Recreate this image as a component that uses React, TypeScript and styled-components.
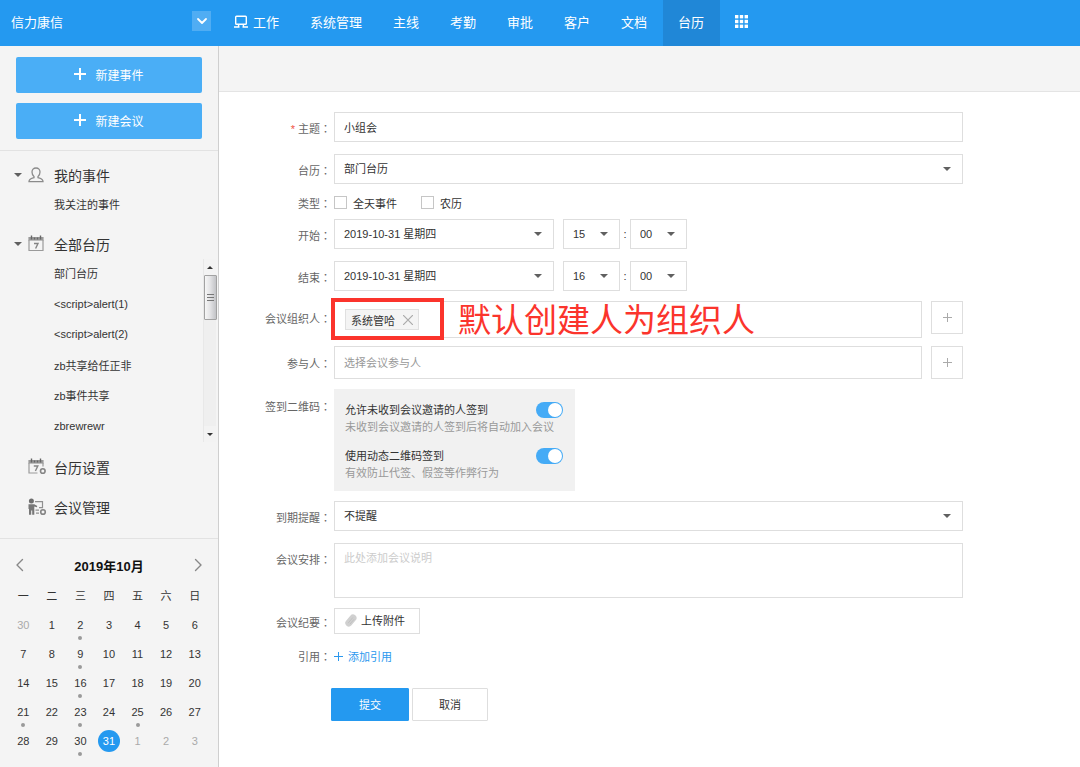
import React from "react";
import styled, { createGlobalStyle, css } from "styled-components";

const GlobalStyle = createGlobalStyle`
  *, *::before, *::after { box-sizing: border-box; }
  body { margin: 0; background: #fff; }
  body, button, input, select, textarea {
    font-family: "Liberation Sans", "Noto Sans CJK SC", sans-serif;
    font-size: 11px;
    color: #333;
  }
  a { color: inherit; text-decoration: none; }
  button { cursor: pointer; padding: 0; }
  ul { list-style: none; margin: 0; padding: 0; }
  svg { display: block; flex: none; }
`;

const line = "#dedede";

/* ---------- shell ---------- */

const Page = styled.div`
  display: flex;
  flex-direction: column;
  min-height: 100vh;
`;

const TopBar = styled.header`
  display: flex;
  height: 46px;
  background: #2499f0;
  color: #fff;
  font-size: 13px;
`;

const Company = styled.div`
  display: flex;
  align-items: center;
  justify-content: space-between;
  width: 219px;
  padding: 0 8px 4px 11px;
`;

const CompanySwitch = styled.button`
  display: flex;
  align-items: center;
  justify-content: center;
  width: 19px;
  height: 20px;
  border: 0;
  background: #50adf3;
`;

const Nav = styled.nav`
  display: flex;
`;

const NavLink = styled.a<{ $active?: boolean }>`
  display: flex;
  align-items: center;
  gap: 5px;
  padding: 0 16px 4px 15px;
  background: ${(p) => (p.$active ? "#2087d7" : "transparent")};
  white-space: nowrap;
`;

const Body = styled.div`
  display: flex;
  flex: 1;
`;

const Sidebar = styled.aside`
  flex: none;
  width: 219px;
  border-right: 1px solid #cfcfcf;
  background: #f4f4f4;
`;

const Main = styled.main`
  flex: 1;
  min-width: 0;
`;

const SubBar = styled.div`
  height: 46px;
  border-bottom: 1px solid #e4e4e4;
  background: #f4f4f4;
`;

/* ---------- sidebar ---------- */

const CreateArea = styled.div`
  display: flex;
  flex-direction: column;
  gap: 10px;
  padding: 11px 16px;
  border-bottom: 1px solid #e2e2e2;
`;

const CreateButton = styled.button`
  display: flex;
  align-items: center;
  justify-content: center;
  gap: 9px;
  height: 36px;
  padding-bottom: 2px;
  border: 0;
  border-radius: 2px;
  background: #4aaef6;
  color: #fff;
  font-size: 12px;
`;

const Menu = styled.nav`
  display: flex;
  flex-direction: column;
  gap: 10px;
  padding: 9px 0 16px;
  border-bottom: 1px solid #e2e2e2;
`;

const MenuHeading = styled.a`
  display: grid;
  grid-template-columns: 14px 26px 1fr;
  align-items: center;
  height: 30px;
  padding: 0 0 1px 14px;
  font-size: 14px;
`;

const MenuItem = styled.a`
  display: flex;
  align-items: center;
  min-height: 29px;
  padding: 0 0 2px 54px;
`;

const ScrollArea = styled.div`
  display: flex;
  height: 183px;
  padding-right: 2px;
`;

const CalendarList = styled.ul`
  flex: 1;
  display: grid;
  grid-auto-rows: 1fr;
  align-items: center;
`;

const ScrollTrack = styled.div`
  display: flex;
  flex-direction: column;
  justify-content: space-between;
  align-items: center;
  width: 13px;
  border-left: 1px solid #e8e8e8;
  background: #efefef;
`;

const ScrollEnd = styled.button`
  display: flex;
  align-items: center;
  justify-content: center;
  width: 12px;
  height: 16px;
  border: 0;
  background: #f3f3f3;
`;

const ScrollThumb = styled.div`
  display: flex;
  align-items: center;
  justify-content: center;
  width: 13px;
  height: 45px;
  margin-bottom: auto;
  border: 1px solid #a2a2a2;
  border-radius: 1px;
  background: linear-gradient(90deg, #f6f6f6, #e4e4e6 45%, #c2c3c6);
`;

/* ---------- month calendar ---------- */

const Month = styled.section`
  padding: 12px 9px 0;
`;

const MonthHead = styled.div`
  display: flex;
  align-items: center;
  justify-content: space-between;
  height: 30px;
  padding: 0 6px 2px;
`;

const MonthTitle = styled.h2`
  margin: 0;
  color: #111;
  font-size: 13px;
`;

const MonthArrow = styled.button`
  display: flex;
  border: 0;
  background: none;
`;

const MonthTable = styled.table`
  width: 100%;
  border-collapse: collapse;
  table-layout: fixed;
  text-align: center;

  th,
  td {
    height: 29px;
    padding: 0;
    font-weight: 400;
    line-height: 22px;
  }
`;

const Day = styled.span<{ $dim?: boolean; $today?: boolean; $event?: boolean }>`
  position: relative;
  display: inline-block;
  width: 22px;
  border-radius: 50%;
  vertical-align: middle;
  color: ${(p) => (p.$dim ? "#aaa" : "#333")};
  ${(p) => p.$today && css`background: #2499f0; color: #fff;`}
  ${(p) =>
    p.$event &&
    css`
      &::after {
        content: "";
        position: absolute;
        left: 9px;
        bottom: -4px;
        width: 4px;
        height: 4px;
        border-radius: 50%;
        background: #9a9a9a;
      }
    `}
`;

/* ---------- form ---------- */

const Form = styled.form`
  display: flex;
  flex-direction: column;
  gap: 10px;
  padding: 20px 117px 20px 0;
`;

const Group = styled.div<{ $gap?: number }>`
  display: flex;
  flex-direction: column;
  gap: ${(p) => p.$gap ?? 12}px;
`;

const Row = styled.div`
  display: grid;
  grid-template-columns: 112px minmax(0, 1fr);
  column-gap: 3px;
  align-items: start;
`;

const Label = styled.label<{ $line?: number }>`
  height: ${(p) => (p.$line ?? 32) - 2}px;
  line-height: ${(p) => p.$line ?? 32}px;
  color: #666;
  text-align: right;
  white-space: nowrap;
`;

const Colon = styled.span`
  font-family: "Noto Sans CJK TC", sans-serif;
`;

const Required = styled.span`
  color: #f0533f;
`;

const boxed = css`
  width: 100%;
  border: 1px solid ${line};
  border-radius: 0;
  background: #fff;
  outline: 0;
`;

const TextInput = styled.input<{ $tall?: boolean }>`
  ${boxed}
  height: ${(p) => (p.$tall ? 33 : 30)}px;
  padding: 0 9px;

  &::placeholder {
    color: #999;
  }
`;

const TextArea = styled.textarea`
  ${boxed}
  display: block;
  height: 55px;
  padding: 6px 9px;
  line-height: 16px;
  resize: none;

  &::placeholder {
    color: #ccc;
  }
`;

const SelectBox = styled.div<{ $width?: number }>`
  position: relative;
  width: ${(p) => (p.$width ? `${p.$width}px` : "100%")};

  select {
    ${boxed}
    display: block;
    height: 30px;
    padding: 0 24px 0 9px;
    appearance: none;
  }

  svg {
    position: absolute;
    right: 12px;
    top: 13px;
    pointer-events: none;
  }
`;

const TimeLine = styled.div`
  display: flex;
  align-items: center;
`;

const TimePair = styled.div`
  display: flex;
  align-items: center;
  margin-left: 9px;
`;

const TimeColon = styled.span`
  width: 10px;
  text-align: center;
`;

const Checks = styled.div`
  display: flex;
  gap: 24px;
`;

const Check = styled.label`
  display: flex;
  align-items: center;
  gap: 6px;
  height: 13px;

  input {
    width: 13px;
    height: 13px;
    margin: 0;
    appearance: none;
    border: 1px solid #c6c6c6;
    background: #fff;
  }
`;

const PeopleLine = styled.div`
  display: flex;
  align-items: flex-start;
  gap: 9px;
`;

const PeopleBox = styled.div`
  ${boxed}
  position: relative;
  flex: 1;
  display: flex;
  align-items: center;
  height: 37px;
  padding: 0 10px;
`;

const AddButton = styled.button`
  display: flex;
  align-items: center;
  justify-content: center;
  flex: none;
  width: 32px;
  height: 33px;
  border: 1px solid ${line};
  background: #fff;
`;

const Tag = styled.span`
  display: flex;
  align-items: center;
  gap: 8px;
  height: 21px;
  padding: 0 5px;
  border: 1px solid #e0e0e0;
  background: #f4f4f4;
`;

const TagRemove = styled.button`
  border: 0;
  background: none;
`;

const Highlight = styled.span`
  position: absolute;
  left: -4px;
  top: -4px;
  width: 113px;
  height: 42px;
  border: 4px solid #fb342c;
  pointer-events: none;
`;

const Note = styled.span`
  position: absolute;
  left: 123px;
  top: 0;
  color: #fb342c;
  font-size: 33px;
  line-height: 38px;
  white-space: nowrap;
`;

const SignInPanel = styled.div`
  display: flex;
  flex-direction: column;
  gap: 12px;
  width: 241px;
  padding: 13px 12px 9px 11px;
  background: #f1f1f1;
`;

const SignInOption = styled.label`
  display: grid;
  grid-template-columns: 1fr 27px;
  line-height: 16px;
`;

const Hint = styled.span`
  grid-column: 1 / -1;
  color: #999;
  line-height: 18px;
`;

const Toggle = styled.input`
  display: flex;
  align-items: center;
  justify-content: flex-end;
  width: 27px;
  height: 16px;
  margin: 0;
  padding: 1px;
  appearance: none;
  border-radius: 8px;
  background: #45abf6;

  &::before {
    content: "";
    width: 14px;
    height: 14px;
    border-radius: 50%;
    background: #fff;
  }

  &:not(:checked) {
    justify-content: flex-start;
    background: #ccc;
  }
`;

const UploadButton = styled.button`
  display: flex;
  align-items: center;
  justify-self: start;
  gap: 4px;
  height: 26px;
  padding: 0 14px 2px 10px;
  border: 1px solid ${line};
  background: #fff;
`;

const AddLink = styled.a`
  display: flex;
  align-items: center;
  gap: 5px;
  height: 20px;
  color: #2b98ee;
`;

const Actions = styled.div`
  display: flex;
  gap: 3px;
  padding: 12px 0 0 112px;
`;

const ActionButton = styled.button<{ $primary?: boolean }>`
  width: ${(p) => (p.$primary ? 78 : 76)}px;
  height: 33px;
  padding-bottom: 2px;
  border: 1px solid ${(p) => (p.$primary ? "#2499f0" : line)};
  border-radius: 1px;
  background: ${(p) => (p.$primary ? "#2499f0" : "#fff")};
  color: ${(p) => (p.$primary ? "#fff" : "#333")};
`;

/* ---------- icons ---------- */

const Caret = ({ up }: { up?: boolean }) => (
  <svg width="8" height="4" viewBox="0 0 8 4" aria-hidden="true">
    <path d={up ? "M0 4h8L4 0z" : "M0 0h8L4 4z"} fill="#606060" />
  </svg>
);

const SmallCaret = ({ up }: { up?: boolean }) => (
  <svg width="6" height="3" viewBox="0 0 6 3" aria-hidden="true">
    <path d={up ? "M0 3h6L3 0z" : "M0 0h6L3 3z"} fill="#333" />
  </svg>
);

const Plus = ({ size, color, weight = 1 }: { size: number; color: string; weight?: number }) => (
  <svg width={size} height={size} viewBox={`0 0 ${size} ${size}`} aria-hidden="true">
    <path
      d={`M${size / 2} 0V${size}M0 ${size / 2}H${size}`}
      stroke={color}
      strokeWidth={weight}
      fill="none"
    />
  </svg>
);

const Chevron = ({ d, color, weight, w, h }: { d: string; color: string; weight: number; w: number; h: number }) => (
  <svg width={w} height={h} viewBox={`0 0 ${w} ${h}`} aria-hidden="true">
    <path d={d} fill="none" stroke={color} strokeWidth={weight} strokeLinecap="round" strokeLinejoin="round" />
  </svg>
);

const ComputerIcon = () => (
  <svg width="14" height="13" viewBox="0 0 14 13" fill="none" stroke="#fff" strokeWidth="1.4" aria-hidden="true">
    <rect x="1.700" y="1.200" width="10.600" height="8" rx="0.800" />
    <path d="M0 12h5.500M8.500 12H14M4.600 9.600v2.400M9.400 9.600v2.400" />
  </svg>
);

const GridIcon = () => (
  <svg width="13" height="13" viewBox="0 0 13 13" fill="#fff" aria-hidden="true">
    {[0, 4.8, 9.6].map((y) => [0, 4.8, 9.6].map((x) => <rect key={`${x}-${y}`} x={x} y={y} width="3.4" height="3.4" />))}
  </svg>
);

const PersonIcon = () => (
  <svg width="16" height="16" viewBox="0 0 16 16" fill="none" stroke="#8b8b8b" strokeWidth="1.3" aria-hidden="true">
    <path d="M8 1C5.400 1 4 2.700 4 5c0 2 .8 3.600 2 4.500v1.200C4.200 11.300 1 11.800 1 14.600h14c0-2.800-3.200-3.300-5-3.900V9.500c1.200-.9 2-2.500 2-4.500 0-2.300-1.400-4-4-4z" />
  </svg>
);

const CalendarIcon = () => (
  <svg width="16" height="17" viewBox="0 0 16 17" fill="none" stroke="#9a9a9a" aria-hidden="true">
    <path d="M1 5v10.500h14V5" strokeWidth="1.200" />
    <path d="M.4 2h15.200v3.600H.4z" fill="#9a9a9a" stroke="none" />
    <path d="M3.500 .5v4M6.500 2.500v2M9.500 2.500v2M12.500 .5v4" stroke="#666" strokeWidth="1.400" />
    <path d="M6 8.500h4L7.600 13.500" strokeWidth="1.400" stroke="#858585" />
  </svg>
);

const CalendarSettingsIcon = () => (
  <svg width="19" height="17" viewBox="0 0 19 17" fill="none" stroke="#9a9a9a" aria-hidden="true">
    <path d="M1 5v10h8.500M15 5v3.500" strokeWidth="1.200" />
    <path d="M.4 2h15.200v3.600H.4z" fill="#9a9a9a" stroke="none" />
    <path d="M3.500 .5v4M6.500 2.500v2M9.500 2.500v2M12.500 .5v4" stroke="#666" strokeWidth="1.400" />
    <path d="M5.800 8h4L7.400 13" strokeWidth="1.400" stroke="#858585" />
    <circle cx="14.800" cy="13" r="2.300" strokeWidth="1.600" stroke="#858585" />
  </svg>
);

const MeetingIcon = () => (
  <svg width="19" height="18" viewBox="0 0 19 18" fill="none" stroke="#909090" aria-hidden="true">
    <circle cx="3.400" cy="3" r="2.500" fill="#6e6e6e" stroke="none" />
    <path d="M.5 6.200h5.800l3 1.700-.5 1.400-2.500-.8V16.800H4.200V12.500H3.200v4.300H1V11H.5z" fill="#777" stroke="none" />
    <path d="M7 3.600h7.500v6H11" strokeWidth="1.200" />
    <path d="M7.500 12.200h3.500M8 15.200h3" strokeWidth="1.200" />
    <circle cx="15" cy="14" r="2.300" strokeWidth="1.600" stroke="#858585" />
  </svg>
);

const ClipIcon = () => (
  <svg width="12" height="13" viewBox="0 0 12 13" fill="none" strokeLinecap="round" aria-hidden="true">
    <path d="M3.800 9 8 4" stroke="#d0d0d0" strokeWidth="7" />
    <path d="M3.400 8.800 7.600 3.800M5.200 9.800 8.800 5.600" stroke="#bcbcbc" strokeWidth="0.800" />
  </svg>
);

const CloseIcon = () => (
  <svg width="10" height="10" viewBox="0 0 10 10" aria-hidden="true">
    <path d="M0 0l10 10M10 0L0 10" stroke="#aaa" strokeWidth="1.200" />
  </svg>
);

/* ---------- data ---------- */

const navItems = ["系统管理", "主线", "考勤", "审批", "客户", "文档", "台历"];
const calendars = ["部门台历", "<script>alert(1)", "<script>alert(2)", "zb共享给任正非", "zb事件共享", "zbrewrewr"];
const weekdays = ["一", "二", "三", "四", "五", "六", "日"];
const weeks = [
  [30, 1, 2, 3, 4, 5, 6],
  [7, 8, 9, 10, 11, 12, 13],
  [14, 15, 16, 17, 18, 19, 20],
  [21, 22, 23, 24, 25, 26, 27],
  [28, 29, 30, 31, 1, 2, 3],
];
const eventDays = [2, 9, 16, 21, 23, 25, 30];

function FieldLabel({ id, text, required, lineHeight }: { id?: string; text: string; required?: boolean; lineHeight?: number }) {
  return (
    <Label htmlFor={id} $line={lineHeight}>
      {required && <Required>* </Required>}
      {text}
      <Colon>：</Colon>
    </Label>
  );
}

function Dropdown({ id, value, width, label }: { id?: string; value: string; width?: number; label?: string }) {
  return (
    <SelectBox $width={width}>
      <select id={id} aria-label={label} defaultValue={value}>
        <option>{value}</option>
      </select>
      <Caret />
    </SelectBox>
  );
}

function TimeRow({ id, text, hour }: { id: string; text: string; hour: string }) {
  return (
    <Row>
      <FieldLabel id={id} text={text} />
      <TimeLine>
        <Dropdown id={id} value="2019-10-31 星期四" width={220} />
        <TimePair>
          <Dropdown value={hour} width={57} label={`${text}小时`} />
          <TimeColon>:</TimeColon>
          <Dropdown value="00" width={57} label={`${text}分钟`} />
        </TimePair>
      </TimeLine>
    </Row>
  );
}

function MonthCalendar() {
  return (
    <Month>
      <MonthHead>
        <MonthArrow type="button" aria-label="上个月">
          <Chevron w={9} h={14} d="M7.500 1.500 2 7l5.500 5.500" color="#888" weight={1.4} />
        </MonthArrow>
        <MonthTitle>2019年10月</MonthTitle>
        <MonthArrow type="button" aria-label="下个月">
          <Chevron w={9} h={14} d="M1.500 1.500 7 7l-5.500 5.500" color="#888" weight={1.4} />
        </MonthArrow>
      </MonthHead>
      <MonthTable>
        <thead>
          <tr>
            {weekdays.map((d) => (
              <th key={d} scope="col">{d}</th>
            ))}
          </tr>
        </thead>
        <tbody>
          {weeks.map((week, w) => (
            <tr key={w}>
              {week.map((d, i) => {
                const dim = (w === 0 && d > 7) || (w === 4 && d < 7);
                return (
                  <td key={i}>
                    <Day $dim={dim} $today={d === 31} $event={!dim && eventDays.includes(d)}>{d}</Day>
                  </td>
                );
              })}
            </tr>
          ))}
        </tbody>
      </MonthTable>
    </Month>
  );
}

function SideMenu() {
  return (
    <Menu>
      <div>
        <MenuHeading href="#mine"><Caret /><PersonIcon />我的事件</MenuHeading>
        <MenuItem href="#followed">我关注的事件</MenuItem>
      </div>
      <div>
        <MenuHeading href="#all"><Caret /><CalendarIcon />全部台历</MenuHeading>
        <ScrollArea>
          <CalendarList>
            {calendars.map((name) => (
              <li key={name}><MenuItem href="#calendar">{name}</MenuItem></li>
            ))}
          </CalendarList>
          <ScrollTrack>
            <ScrollEnd type="button" aria-label="向上滚动"><SmallCaret up /></ScrollEnd>
            <ScrollThumb>
              <svg width="7" height="8" viewBox="0 0 7 8" aria-hidden="true">
                <path d="M0 .5h7M0 3.500h7M0 6.500h7" stroke="#777" />
              </svg>
            </ScrollThumb>
            <ScrollEnd type="button" aria-label="向下滚动"><SmallCaret /></ScrollEnd>
          </ScrollTrack>
        </ScrollArea>
      </div>
      <MenuHeading href="#settings"><span /><CalendarSettingsIcon />台历设置</MenuHeading>
      <MenuHeading href="#meetings"><span /><MeetingIcon />会议管理</MenuHeading>
    </Menu>
  );
}

function MeetingForm() {
  return (
    <Form onSubmit={(e) => e.preventDefault()}>
      <Group>
        <Row>
          <FieldLabel id="subject" text="主题" required />
          <TextInput id="subject" defaultValue="小组会" />
        </Row>
        <Row>
          <FieldLabel id="calendar" text="台历" />
          <Dropdown id="calendar" value="部门台历" />
        </Row>
        <Row>
          <FieldLabel text="类型" lineHeight={15} />
          <Checks>
            <Check><input type="checkbox" />全天事件</Check>
            <Check><input type="checkbox" />农历</Check>
          </Checks>
        </Row>
      </Group>
      <Group>
        <TimeRow id="start" text="开始" hour="15" />
        <TimeRow id="end" text="结束" hour="16" />
      </Group>
      <Group $gap={8}>
        <Row>
          <FieldLabel text="会议组织人" lineHeight={35} />
          <PeopleLine>
            <PeopleBox>
              <Tag>
                系统管哈
                <TagRemove type="button" aria-label="移除"><CloseIcon /></TagRemove>
              </Tag>
              <Highlight />
              <Note>默认创建人为组织人</Note>
            </PeopleBox>
            <AddButton type="button" aria-label="添加组织人"><Plus size={9} color="#aaa" /></AddButton>
          </PeopleLine>
        </Row>
        <Row>
          <FieldLabel id="members" text="参与人" lineHeight={35} />
          <PeopleLine>
            <TextInput id="members" placeholder="选择会议参与人" $tall />
            <AddButton type="button" aria-label="添加参与人"><Plus size={9} color="#aaa" /></AddButton>
          </PeopleLine>
        </Row>
      </Group>
      <Row>
        <FieldLabel text="签到二维码" lineHeight={35} />
        <SignInPanel>
          <SignInOption>
            允许未收到会议邀请的人签到
            <Toggle type="checkbox" defaultChecked />
            <Hint>未收到会议邀请的人签到后将自动加入会议</Hint>
          </SignInOption>
          <SignInOption>
            使用动态二维码签到
            <Toggle type="checkbox" defaultChecked />
            <Hint>有效防止代签、假签等作弊行为</Hint>
          </SignInOption>
        </SignInPanel>
      </Row>
      <Group>
        <Row>
          <FieldLabel id="reminder" text="到期提醒" />
          <Dropdown id="reminder" value="不提醒" />
        </Row>
        <Row>
          <FieldLabel id="agenda" text="会议安排" />
          <TextArea id="agenda" placeholder="此处添加会议说明" />
        </Row>
      </Group>
      <Group>
        <Row>
          <FieldLabel text="会议纪要" lineHeight={28} />
          <UploadButton type="button"><ClipIcon />上传附件</UploadButton>
        </Row>
        <Row>
          <FieldLabel text="引用" lineHeight={20} />
          <AddLink href="#reference"><Plus size={9} color="#2b98ee" />添加引用</AddLink>
        </Row>
      </Group>
      <Actions>
        <ActionButton type="submit" $primary>提交</ActionButton>
        <ActionButton type="button">取消</ActionButton>
      </Actions>
    </Form>
  );
}

export default function App() {
  return (
    <Page>
      <GlobalStyle />
      <TopBar>
        <Company>
          信力康信
          <CompanySwitch type="button" aria-label="切换公司">
            <Chevron w={12} h={8} d="M2 2l4 4 4-4" color="#fff" weight={1.8} />
          </CompanySwitch>
        </Company>
        <Nav>
          <NavLink href="#work"><ComputerIcon />工作</NavLink>
          {navItems.map((item) => (
            <NavLink key={item} href="#nav" $active={item === "台历"}>{item}</NavLink>
          ))}
          <NavLink href="#apps" aria-label="更多应用"><GridIcon /></NavLink>
        </Nav>
      </TopBar>
      <Body>
        <Sidebar>
          <CreateArea>
            <CreateButton type="button"><Plus size={12} color="#fff" weight={2} />新建事件</CreateButton>
            <CreateButton type="button"><Plus size={12} color="#fff" weight={2} />新建会议</CreateButton>
          </CreateArea>
          <SideMenu />
          <MonthCalendar />
        </Sidebar>
        <Main>
          <SubBar />
          <MeetingForm />
        </Main>
      </Body>
    </Page>
  );
}
